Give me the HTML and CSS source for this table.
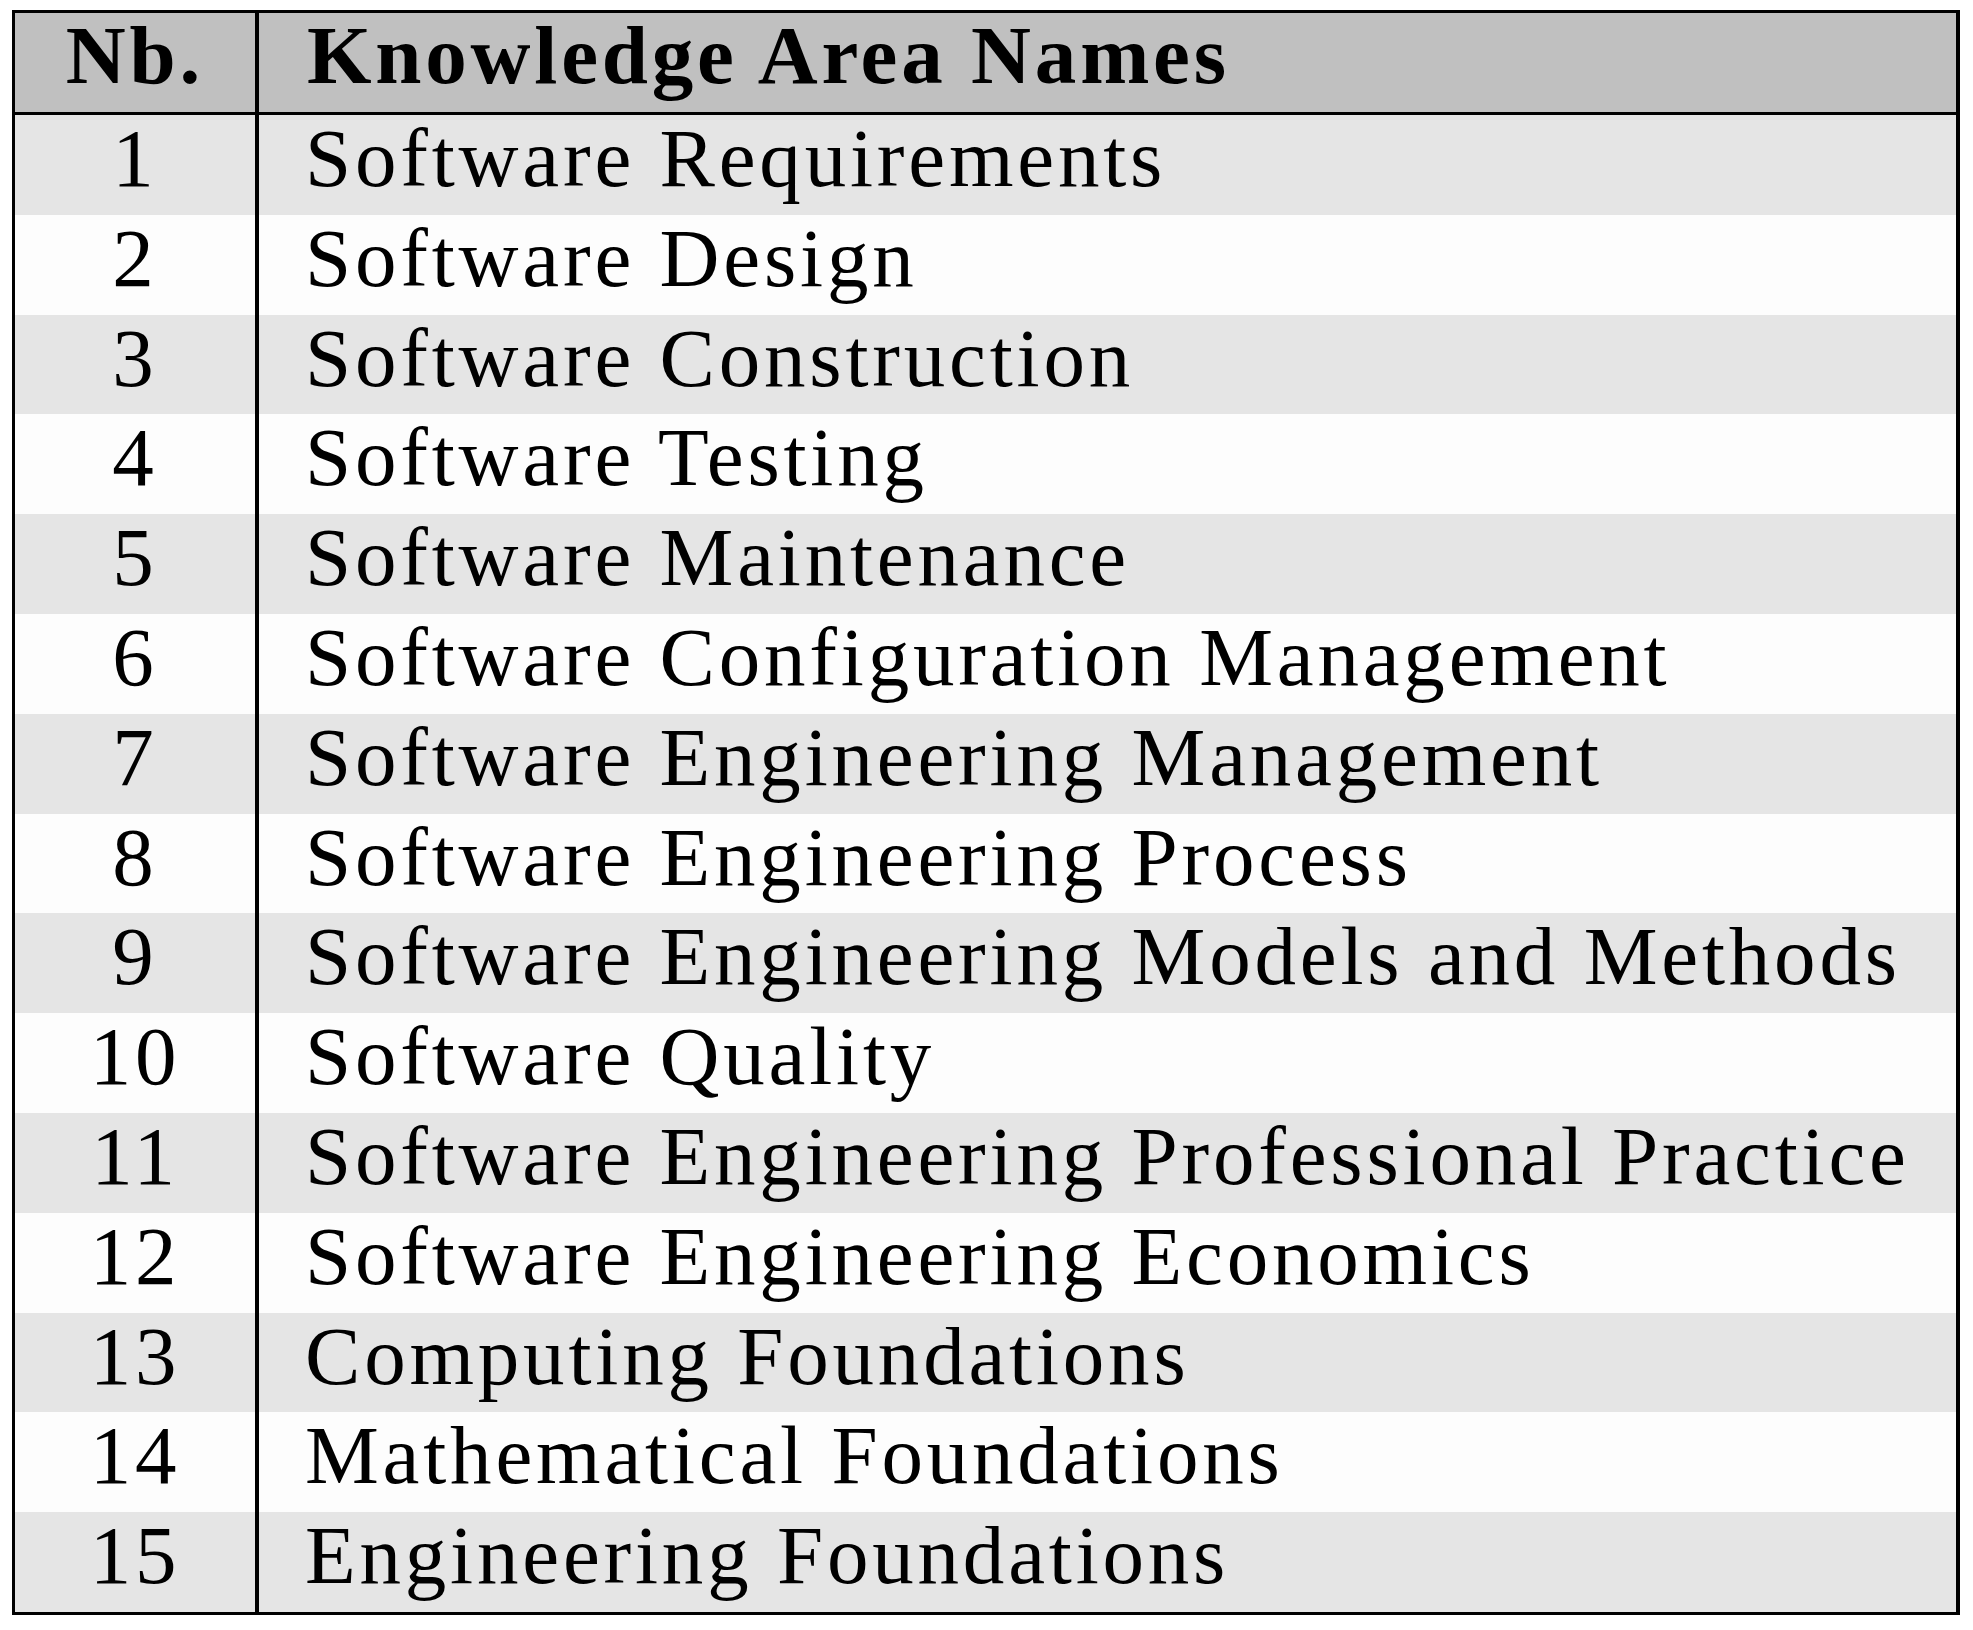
FILE: index.html
```html
<!DOCTYPE html>
<html lang="en">
<head>
<meta charset="utf-8">
<title>Knowledge Areas</title>
<link rel="stylesheet" href="styles.css">
</head>
<body>
<div class="ka-table">
  <div class="row head"><div class="nb">Nb.</div><div class="name">Knowledge Area Names</div></div>
  <div class="row odd"><div class="nb">1</div><div class="name">Software Requirements</div></div>
  <div class="row even"><div class="nb">2</div><div class="name">Software Design</div></div>
  <div class="row odd"><div class="nb">3</div><div class="name">Software Construction</div></div>
  <div class="row even"><div class="nb">4</div><div class="name">Software Testing</div></div>
  <div class="row odd"><div class="nb">5</div><div class="name">Software Maintenance</div></div>
  <div class="row even"><div class="nb">6</div><div class="name">Software Configuration Management</div></div>
  <div class="row odd"><div class="nb">7</div><div class="name">Software Engineering Management</div></div>
  <div class="row even"><div class="nb">8</div><div class="name">Software Engineering Process</div></div>
  <div class="row odd"><div class="nb">9</div><div class="name">Software Engineering Models and Methods</div></div>
  <div class="row even"><div class="nb">10</div><div class="name">Software Quality</div></div>
  <div class="row odd"><div class="nb">11</div><div class="name">Software Engineering Professional Practice</div></div>
  <div class="row even"><div class="nb">12</div><div class="name">Software Engineering Economics</div></div>
  <div class="row odd"><div class="nb">13</div><div class="name">Computing Foundations</div></div>
  <div class="row even"><div class="nb">14</div><div class="name">Mathematical Foundations</div></div>
  <div class="row odd"><div class="nb">15</div><div class="name">Engineering Foundations</div></div>
</div>
</body>
</html>
```
FILE: styles.css
```css
html, body {
  margin: 0;
  padding: 0;
  background: #ffffff;
}

body {
  font-family: "Liberation Serif", "Times New Roman", serif;
  color: #000;
}

.ka-table {
  margin: 10px 0 0 12px;
  width: 1948px;
  box-sizing: border-box;
  border: 3px solid #000;
  border-right-width: 4px;
  border-bottom-width: 3.5px;
}

.row {
  display: grid;
  grid-template-columns: 244px 1fr;
  height: 99.8px;
  font-size: 83px;
  line-height: 87px;
  letter-spacing: 3.8px;
}

.row .nb {
  border-right: 4px solid #000;
  text-align: center;
}

.row .name {
  padding-left: 46px;
  white-space: nowrap;
}

.head {
  height: 99px;
  background: #c0c0c0;
  border-bottom: 3.5px solid #000;
  font-weight: bold;
  line-height: 85px;
}

.head .name {
  padding-left: 48px;
}

.odd {
  background: #e5e5e5;
}

.even {
  background: #fdfdfd;
}
```
